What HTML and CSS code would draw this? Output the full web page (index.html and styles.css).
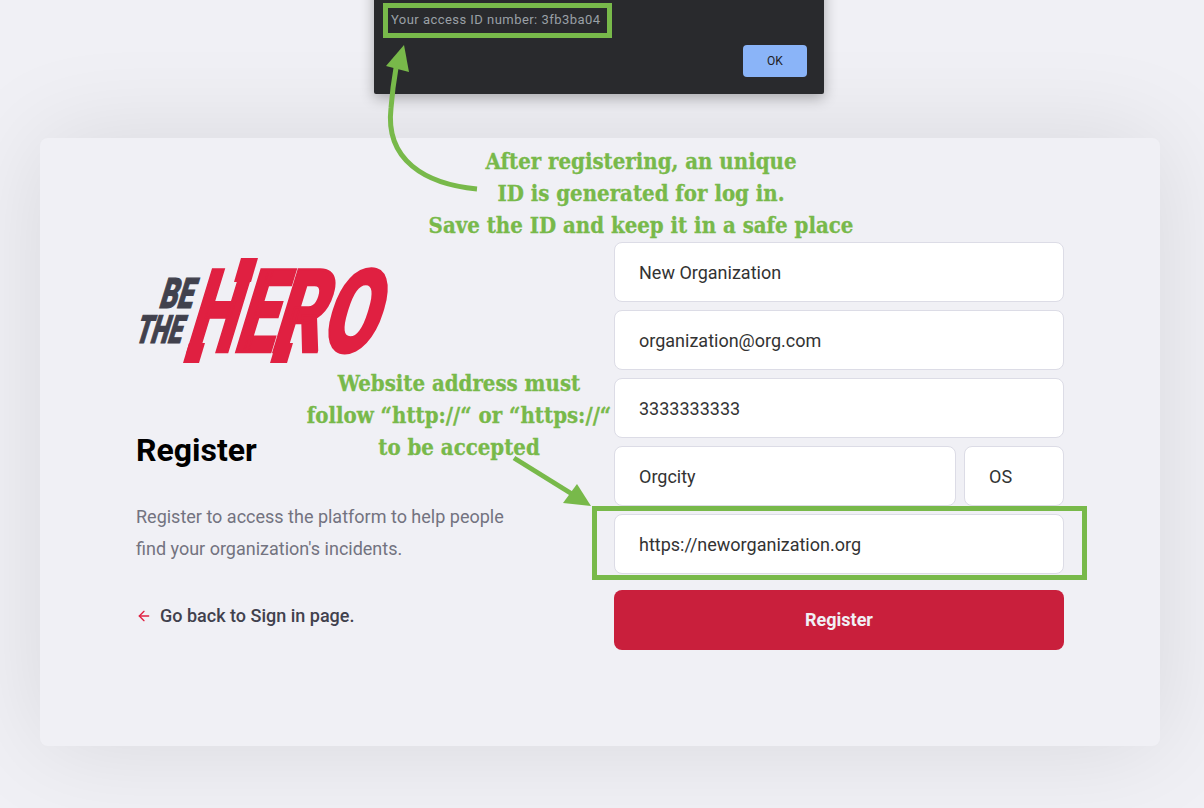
FILE: index.html
```html
<!DOCTYPE html>
<html lang="en">
<head>
<meta charset="utf-8">
<title>Register</title>
<link rel="stylesheet" href="styles.css">
</head>
<body>
<main class="page">
  <section class="card">
    <div class="intro">
      <svg class="logo" width="250" height="109" viewBox="0 0 250 109" role="img" aria-label="Be The Hero">
        <text class="logo-small" font-size="42" textLength="33" lengthAdjust="spacingAndGlyphs" transform="translate(22 50) skewX(-17)">BE</text>
        <text class="logo-small" font-size="39" textLength="46" lengthAdjust="spacingAndGlyphs" transform="translate(-2 85) skewX(-17)">THE</text>
        <text class="logo-big" font-size="116" textLength="48" lengthAdjust="spacingAndGlyphs" transform="translate(47.5 94) skewX(-17)">H</text>
        <text class="logo-big" font-size="116" textLength="40" lengthAdjust="spacingAndGlyphs" transform="translate(96 94) skewX(-17)">E</text>
        <text class="logo-big" font-size="116" textLength="50" lengthAdjust="spacingAndGlyphs" transform="translate(133 94) skewX(-17)">R</text>
        <text class="logo-big" font-size="116" textLength="55" lengthAdjust="spacingAndGlyphs" transform="translate(182 94) skewX(-17)">O</text>
        <polygon class="logo-stem" points="105,0 122,0 115,24 98,24"/>
        <polygon class="logo-stem" points="53,85 69,85 63,105 47,105"/>
        <polygon class="logo-stem" points="140,85 157,85 151,105 134,105"/>
      </svg>
      <h1 class="title">Register</h1>
      <p class="lead">Register to access the platform to help people find your organization's incidents.</p>
      <a class="back" href="#">
        <svg class="back-icon" width="16" height="16" viewBox="0 0 24 24" fill="none" stroke="currentColor" stroke-width="2" stroke-linecap="round" stroke-linejoin="round"><line x1="19" y1="12" x2="5" y2="12"/><polyline points="12 19 5 12 12 5"/></svg>
        Go back to Sign in page.
      </a>
    </div>
    <form class="form">
      <input class="field" value="New Organization">
      <input class="field" value="organization@org.com">
      <input class="field" value="3333333333">
      <div class="row">
        <input class="field field-grow" value="Orgcity">
        <input class="field field-uf" value="OS">
      </div>
      <input class="field" value="https://neworganization.org">
      <button class="submit" type="button">Register</button>
    </form>
  </section>
</main>

<div class="dialog">
  <p class="dialog-text">Your access ID number: 3fb3ba04</p>
  <button class="dialog-ok" type="button">OK</button>
</div>

<svg class="marks" width="1204" height="808" viewBox="0 0 1204 808" fill="none">
  <rect class="mark-line" x="385.5" y="5.5" width="224" height="30"/>
  <rect class="mark-line" x="594.5" y="508.5" width="490" height="69"/>
  <path class="mark-line" d="M477 189 C425 184 385 160 391 108 C392 95 393 85 396 68"/>
  <polygon class="mark-fill" points="404,45 386,66 409,72"/>
  <line class="mark-line" x1="514" y1="458" x2="572" y2="494"/>
  <polygon class="mark-fill" points="591,506 563,503 577,484"/>
</svg>

<p class="note note-id">After registering, an unique<br>ID is generated for log in.<br>Save the ID and keep it in a safe place</p>
<p class="note note-url">Website address must<br>follow “http://“ or “https://“<br>to be accepted</p>
</body>
</html>
```
FILE: styles.css
```css
* { box-sizing: border-box; }

html, body { margin: 0; height: 808px; overflow: hidden; }

body {
  position: relative;
  background: #f0f0f5;
  font-family: Roboto, "Liberation Sans", sans-serif;
  color: #41414d;
}

.page { padding: 138px 44px 0 40px; }

.card {
  display: flex;
  justify-content: space-between;
  align-items: center;
  height: 608px;
  padding: 96px;
  background: #f0f0f5;
  border-radius: 8px;
  box-shadow: 0 0 100px rgba(0, 0, 0, 0.1);
}

.intro { width: 380px; }

.logo { display: block; overflow: visible; }
.logo-small, .logo-big { font-family: Roboto, sans-serif; font-weight: 900; }
.logo-small { fill: #41414d; stroke: #41414d; stroke-width: 1.2; }
.logo-big { fill: #e02041; stroke: #e02041; stroke-width: 2.5; }
.logo-stem { fill: #e02041; }

.title {
  margin: 64px 0 32px;
  font-size: 32px;
  font-weight: 700;
  color: #000;
}

.lead {
  margin: 0;
  font-size: 18px;
  line-height: 32px;
  color: #737380;
}

.back {
  display: flex;
  align-items: center;
  margin-top: 40px;
  font-size: 18px;
  font-weight: 500;
  color: #41414d;
  text-decoration: none;
}

.back-icon { margin-right: 8px; color: #e02041; }

.form { display: flex; flex-direction: column; width: 450px; }

.field {
  width: 100%;
  height: 60px;
  margin-top: 8px;
  padding: 0 24px;
  border: 1px solid #dcdce6;
  border-radius: 8px;
  background: #fff;
  font: 400 18px Roboto, sans-serif;
  color: #333;
}

.row { display: flex; gap: 8px; }
.field-grow { flex: 1; min-width: 0; }
.field-uf { flex: none; width: 100px; }

.submit {
  width: 100%;
  height: 60px;
  margin-top: 16px;
  padding: 0 0 2px;
  border: 0;
  border-radius: 8px;
  background: #c91f3c;
  font: 700 18px Roboto, sans-serif;
  color: #f0f0f5;
}

.dialog {
  position: absolute;
  left: 374px;
  top: -40px;
  width: 450px;
  height: 134px;
  background: #292a2d;
  border-radius: 2px;
  box-shadow: 0 4px 14px rgba(0, 0, 0, 0.3);
}

.dialog-text {
  position: absolute;
  left: 17px;
  top: 52px;
  margin: 0;
  font-size: 13px;
  line-height: 16px;
  letter-spacing: 0.46px;
  color: #9aa0a6;
}

.dialog-ok {
  position: absolute;
  right: 17px;
  bottom: 17px;
  width: 64px;
  height: 32px;
  border: 0;
  border-radius: 4px;
  background: #8ab4f8;
  font: 400 12px Roboto, sans-serif;
  color: #202124;
}

.marks { position: absolute; left: 0; top: 0; }
.mark-line { stroke: #78b94a; stroke-width: 5; }
.mark-fill { fill: #78b94a; }

.note {
  position: absolute;
  margin: 0;
  font-family: "DejaVu Serif", "Liberation Serif", serif;
  font-stretch: condensed;
  font-size: 22px;
  font-weight: 700;
  line-height: 32px;
  text-align: center;
  white-space: nowrap;
  color: #78b94a;
  -webkit-text-stroke: 0.3px #78b94a;
}

.note-id { left: 341px; top: 145px; width: 600px; }
.note-url { left: 259px; top: 367px; width: 400px; }
```
